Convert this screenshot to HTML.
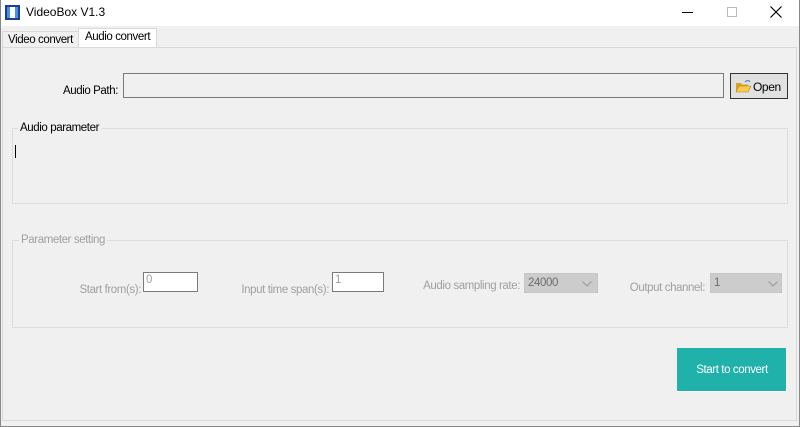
<!DOCTYPE html>
<html><head><meta charset="utf-8"><style>
*{margin:0;padding:0;box-sizing:border-box}
body{width:800px;height:427px;background:#fff;font-family:"Liberation Sans",Arial,sans-serif;font-size:11px;color:#000;position:relative;overflow:hidden}
.a{position:absolute}
.lbl{position:absolute;white-space:nowrap;font-size:11.5px;letter-spacing:-0.4px}
.r{text-align:right}
.dis{color:#a0a0a0}
</style></head><body>
<div class="a" style="left:0;top:0;width:800px;height:427px;border:1px solid #888;border-top:none;background:#f0f0f0"></div>
<div class="a" style="left:0;top:0;width:800px;height:26px;background:#fff;border-left:1px solid #888;border-right:1px solid #888"></div>
<div class="a" style="left:5px;top:5px;width:15px;height:15px;border:2px solid #1e3f8f;background:#4a8fe0"><div class="a" style="left:3px;top:0;width:5px;height:11px;background:#fff"></div></div>
<div class="lbl" style="left:26px;top:5px;font-size:12px;letter-spacing:0">VideoBox V1.3</div>
<div class="a" style="left:682px;top:12px;width:11px;height:1px;background:#000"></div>
<div class="a" style="left:727px;top:7px;width:10px;height:10px;border:1px solid #bbb"></div>
<svg class="a" style="left:770px;top:6px" width="12" height="12"><path d="M0.5 0.5L11.5 11.5M11.5 0.5L0.5 11.5" stroke="#000" stroke-width="1.2"/></svg>
<!-- tabs -->
<div class="a" style="left:2px;top:31px;width:77px;height:17px;border:1px solid #d9d9d9;border-bottom:none;background:#f0f0f0"></div>
<div class="lbl" style="left:8px;top:34px">Video convert</div>
<div class="a" style="left:78px;top:28px;width:79px;height:20px;border:1px solid #d9d9d9;border-bottom:none;background:#fff"></div>
<div class="lbl" style="left:85px;top:31px">Audio convert</div>
<div class="a" style="left:2px;top:47px;width:795px;height:374px;border:1px solid #d9d9d9;background:#f0f0f0"></div>
<!-- path -->
<div class="lbl r" style="left:20px;width:98px;top:85px">Audio Path:</div>
<div class="a" style="left:123px;top:73px;width:601px;height:25px;border:1px solid #7a7a7a;background:#f0f0f0"></div>
<div class="a" style="left:730px;top:73px;width:58px;height:26px;border:1px solid #333;background:#e1e1e1"></div>
<svg class="a" style="left:735px;top:79px" width="17" height="15"><path d="M1 4h5l1 1.5h6V13H1z" fill="#d9a520"/><path d="M1 13l3-6h12l-3 6z" fill="#f5cc50" stroke="#b8860b" stroke-width="0.6"/><path d="M10 3q3-3 5 0" stroke="#3a7ad0" fill="none"/></svg>
<div class="lbl" style="left:753px;top:80px;font-size:12px">Open</div>
<!-- audio parameter -->
<div class="a" style="left:12px;top:128px;width:776px;height:76px;border:1px solid #dcdcdc"></div>
<div class="lbl" style="left:18px;top:122px;background:#f0f0f0;padding:0 2px">Audio parameter</div>
<div class="a" style="left:15px;top:145px;width:1px;height:13px;background:#000"></div>
<!-- parameter setting -->
<div class="a" style="left:12px;top:240px;width:776px;height:88px;border:1px solid #dcdcdc"></div>
<div class="lbl dis" style="left:19px;top:234px;background:#f0f0f0;padding:0 2px">Parameter setting</div>
<div class="lbl dis r" style="left:40px;width:101px;top:284px">Start from(s):</div>
<div class="a" style="left:143px;top:272px;width:55px;height:20px;border:1px solid #7a7a7a;background:#fff"></div>
<div class="lbl dis" style="left:146px;top:274px">0</div>
<div class="lbl dis r" style="left:200px;width:129px;top:284px">Input time span(s):</div>
<div class="a" style="left:332px;top:272px;width:52px;height:20px;border:1px solid #7a7a7a;background:#fff"></div>
<div class="lbl dis" style="left:335px;top:274px">1</div>
<div class="lbl dis r" style="left:400px;width:120px;top:280px">Audio sampling rate:</div>
<div class="a" style="left:524px;top:273px;width:74px;height:20px;border:1px solid #c6c6c6;background:#cccccc"></div>
<div class="lbl" style="left:528px;top:277px;color:#6d6d6d">24000</div>
<svg class="a" style="left:582px;top:281px" width="10" height="6"><path d="M0.5 0.5l4.5 4.5 4.5-4.5" stroke="#999" fill="none"/></svg>
<div class="lbl dis r" style="left:600px;width:105px;top:282px">Output channel:</div>
<div class="a" style="left:710px;top:273px;width:72px;height:20px;border:1px solid #c6c6c6;background:#cccccc"></div>
<div class="lbl" style="left:714px;top:277px;color:#6d6d6d">1</div>
<svg class="a" style="left:768px;top:281px" width="10" height="6"><path d="M0.5 0.5l4.5 4.5 4.5-4.5" stroke="#999" fill="none"/></svg>
<!-- button -->
<div class="a" style="left:677px;top:348px;width:110px;height:44px;background:#20b2aa;border:1px solid #fff;border-left:none;border-top:none"></div>
<div class="lbl" style="left:677px;width:110px;text-align:center;top:364px;color:#fff">Start to convert</div>
</body></html>
